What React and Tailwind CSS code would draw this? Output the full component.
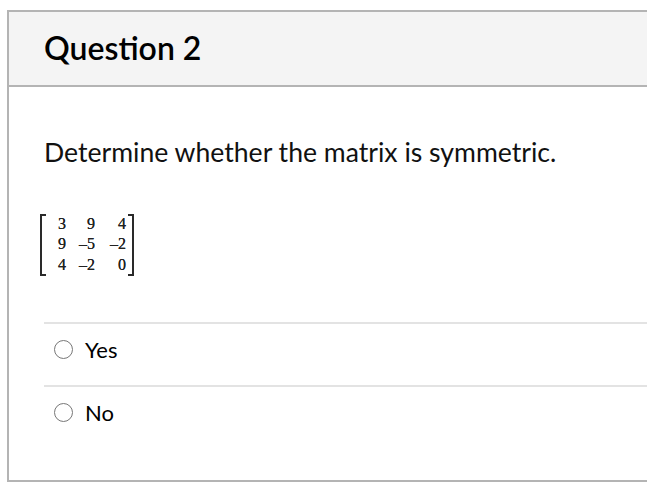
export default function App() {
  const font = { fontFamily: "Lato, 'Noto Sans', sans-serif" };
  return (
    <div className="w-[647px] h-[502px] bg-white overflow-hidden" style={font}>
      <div className="pt-[10px] pl-[7px]">
        <div className="w-[700px] h-[472px] border-2 border-[#b4b4b4] flex flex-col">
          <div className="h-[75px] bg-[#f4f4f4] border-b-2 border-[#b4b4b4] flex items-center pl-[35px] pb-[2px]">
            <h2 className="text-[32px] font-semibold text-black leading-none">Question 2</h2>
          </div>
          <div className="pl-[35px] pt-[52px] flex flex-col">
            <p className="text-[26.6px] text-[#111] leading-none">Determine whether the matrix is symmetric.</p>
            <div className="mt-[48px] ml-[-4px] flex items-stretch h-[62px] w-[94px]" style={{ fontFamily: "'Liberation Serif', serif" }}>
              <div className="w-[6px] border-l-2 border-t-2 border-b-2 border-[#2a2a2a]" />
              <div className="grid grid-cols-[20px_29px_31px] text-[16px] leading-[20px] text-[#222] text-right pr-[2px] pt-[0px] [text-shadow:0_0_0.5px_#222]">
                <span>3</span><span>9</span><span>4</span>
                <span>9</span><span>–5</span><span>–2</span>
                <span>4</span><span>–2</span><span>0</span>
              </div>
              <div className="w-[6px] border-r-2 border-t-2 border-b-2 border-[#2a2a2a]" />
            </div>
            <div className="mt-[46px] w-[620px]">
              {["Yes", "No"].map((t) => (
                <div key={t} className="border-t-2 border-[#e3e3e3] h-[63px] pb-[9px] flex items-center gap-[12px] pl-[10px]">
                  <div className="w-[19px] h-[19px] rounded-full border-[1.5px] border-[#777] bg-white" />
                  <span className="text-[22px] text-black">{t}</span>
                </div>
              ))}
            </div>
          </div>
        </div>
      </div>
    </div>
  );
}
